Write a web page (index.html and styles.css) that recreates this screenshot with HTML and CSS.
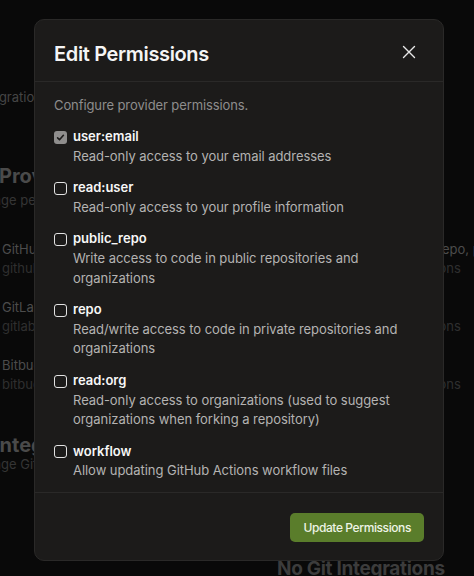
FILE: index.html
```html
<!DOCTYPE html>
<html lang="en">
<head>
<meta charset="utf-8">
<title>Edit Permissions</title>
<link rel="stylesheet" href="styles.css">
</head>
<body>
<div class="page" aria-hidden="true">
  <div class="bg-crumb">Integrations</div>
  <div class="bg-title">Providers</div>
  <div class="bg-lead">Manage permissions for Git providers</div>
  <div class="bg-list">
    <div class="bg-row">
      <div class="bg-left"><div class="bg-name">GitHub</div><div class="bg-host">github.com</div></div>
      <div class="bg-right"><div class="bg-name">read:org, repo, public_repo</div><div class="bg-host">organizations</div></div>
    </div>
    <div class="bg-row">
      <div class="bg-left"><div class="bg-name">GitLab</div><div class="bg-host">gitlab.com</div></div>
      <div class="bg-right"><div class="bg-name">api</div><div class="bg-host">organizations</div></div>
    </div>
    <div class="bg-row">
      <div class="bg-left"><div class="bg-name">Bitbucket</div><div class="bg-host">bitbucket.org</div></div>
      <div class="bg-right"><div class="bg-name">account</div><div class="bg-host">organizations</div></div>
    </div>
  </div>
  <div class="bg-title bg-title-2">Integrations</div>
  <div class="bg-lead bg-lead-2">Manage Git integrations</div>
  <div class="bg-empty">No Git Integrations</div>
</div>

<div class="modal" role="dialog" aria-labelledby="modal-title">
  <div class="modal-header">
    <h2 id="modal-title" class="modal-title">Edit Permissions</h2>
    <button class="close" type="button" aria-label="Close">
      <svg width="14" height="14" viewBox="0 0 14 14" fill="none" stroke="currentColor" stroke-width="1.4" stroke-linecap="round"><path d="M1.5 1.5 12.5 12.5M12.5 1.5 1.5 12.5"/></svg>
    </button>
  </div>
  <div class="modal-body">
    <p class="intro">Configure provider permissions.</p>
    <div class="perm">
      <span class="cb cb-checked"><svg width="13" height="13" viewBox="0 0 13 13" fill="none" stroke="currentColor" stroke-width="1.6" stroke-linecap="round" stroke-linejoin="round"><path d="M3.6 6.9 5.5 8.8 9.4 4.3"/></svg></span>
      <div class="perm-text"><div class="perm-name">user:email</div><div class="perm-desc">Read-only access to your email addresses</div></div>
    </div>
    <div class="perm">
      <span class="cb"></span>
      <div class="perm-text"><div class="perm-name">read:user</div><div class="perm-desc">Read-only access to your profile information</div></div>
    </div>
    <div class="perm">
      <span class="cb"></span>
      <div class="perm-text"><div class="perm-name">public_repo</div><div class="perm-desc">Write access to code in public repositories and organizations</div></div>
    </div>
    <div class="perm">
      <span class="cb"></span>
      <div class="perm-text"><div class="perm-name">repo</div><div class="perm-desc">Read/write access to code in private repositories and organizations</div></div>
    </div>
    <div class="perm">
      <span class="cb"></span>
      <div class="perm-text"><div class="perm-name">read:org</div><div class="perm-desc">Read-only access to organizations (used to suggest organizations when forking a repository)</div></div>
    </div>
    <div class="perm">
      <span class="cb"></span>
      <div class="perm-text"><div class="perm-name">workflow</div><div class="perm-desc">Allow updating GitHub Actions workflow files</div></div>
    </div>
  </div>
  <div class="modal-footer">
    <button class="primary" type="button">Update Permissions</button>
  </div>
</div>
</body>
</html>
```
FILE: styles.css
```css
html, body {
  margin: 0;
  padding: 0;
}

body {
  background: #090909;
  font-family: Inter, "Noto Sans", "Liberation Sans", sans-serif;
  height: 576px;
  overflow: hidden;
}

/* Background page (dimmed under the dialog) */
.page {
  padding-top: 88px;
  width: 560px;
}

.bg-crumb {
  font-size: 13px;
  line-height: 18px;
  color: #454545;
  margin-left: -24px;
}

.bg-title {
  font-size: 20px;
  font-weight: 700;
  line-height: 28px;
  color: #4a4a4a;
  margin-top: 56px;
  margin-left: -1px;
}

.bg-lead {
  font-size: 13px;
  line-height: 18px;
  color: #353535;
  margin-top: 1px;
  margin-left: -33px;
}

.bg-list {
  display: flex;
  flex-direction: column;
  gap: 20px;
  margin-top: 31px;
}

.bg-row {
  display: flex;
}

.bg-left {
  flex: none;
  width: 376px;
  padding-left: 2px;
}

.bg-right {
  white-space: nowrap;
}

.bg-name {
  font-size: 13px;
  line-height: 18px;
  color: #4c4c4c;
}

.bg-host {
  font-size: 13px;
  line-height: 20px;
  color: #2f2f2f;
}

.bg-title-2 {
  margin-top: 39px;
  line-height: 24px;
  margin-left: -6px;
}

.bg-lead-2 {
  margin-top: -2px;
}

.bg-empty {
  font-size: 19px;
  font-weight: 700;
  line-height: 28px;
  letter-spacing: -0.3px;
  color: #3c3c3c;
  margin-top: 82px;
  margin-left: 277px;
  white-space: nowrap;
}

/* Dialog */
.modal {
  position: fixed;
  left: 34px;
  top: 19px;
  width: 410px;
  box-sizing: border-box;
  background: #1c1b1a;
  border: 1px solid #2a2928;
  border-radius: 10px;
  color: #f2f2f2;
}

.modal-header {
  display: flex;
  align-items: flex-start;
  justify-content: space-between;
  padding: 20px 19px 13px;
  border-bottom: 1px solid #2a2928;
}

.modal-title {
  margin: 0;
  font-size: 20px;
  font-weight: 600;
  line-height: 28px;
  letter-spacing: -0.35px;
  color: #f5f5f5;
}

.close {
  width: 30px;
  height: 24px;
  padding: 0;
  border: none;
  background: transparent;
  color: #e8e8e8;
  display: flex;
  align-items: center;
  justify-content: center;
}

.modal-body {
  display: flex;
  flex-direction: column;
  gap: 12px;
  padding: 13.5px 19px 11px;
}

.intro {
  margin: 0;
  font-size: 13px;
  line-height: 19.6px;
  letter-spacing: -0.1px;
  color: #8e8d8c;
}

.perm {
  display: grid;
  grid-template-columns: 13px 1fr;
  column-gap: 6px;
}

.cb {
  width: 13px;
  height: 13px;
  box-sizing: border-box;
  margin-top: 3.5px;
  border: 1.5px solid #e2e2e2;
  border-radius: 3px;
  display: flex;
  align-items: center;
  justify-content: center;
}

.cb-checked {
  border: none;
  background: #8f8e8d;
  color: #1e1d1c;
}

.perm-name {
  font-size: 13px;
  font-weight: 600;
  line-height: 19.6px;
  color: #f7f7f7;
}

.perm-desc {
  font-size: 13px;
  line-height: 19.6px;
  letter-spacing: -0.05px;
  color: #b4b3b2;
}

.modal-footer {
  display: flex;
  justify-content: flex-end;
  padding: 20px 19px 18px;
  border-top: 1px solid #2a2928;
}

.primary {
  height: 29px;
  padding: 0 13px;
  border: none;
  border-radius: 5px;
  background: #5a7d2b;
  color: #eef4e6;
  font-family: Inter, "Noto Sans", "Liberation Sans", sans-serif;
  font-size: 12px;
  font-weight: 500;
  letter-spacing: -0.4px;
}
```
